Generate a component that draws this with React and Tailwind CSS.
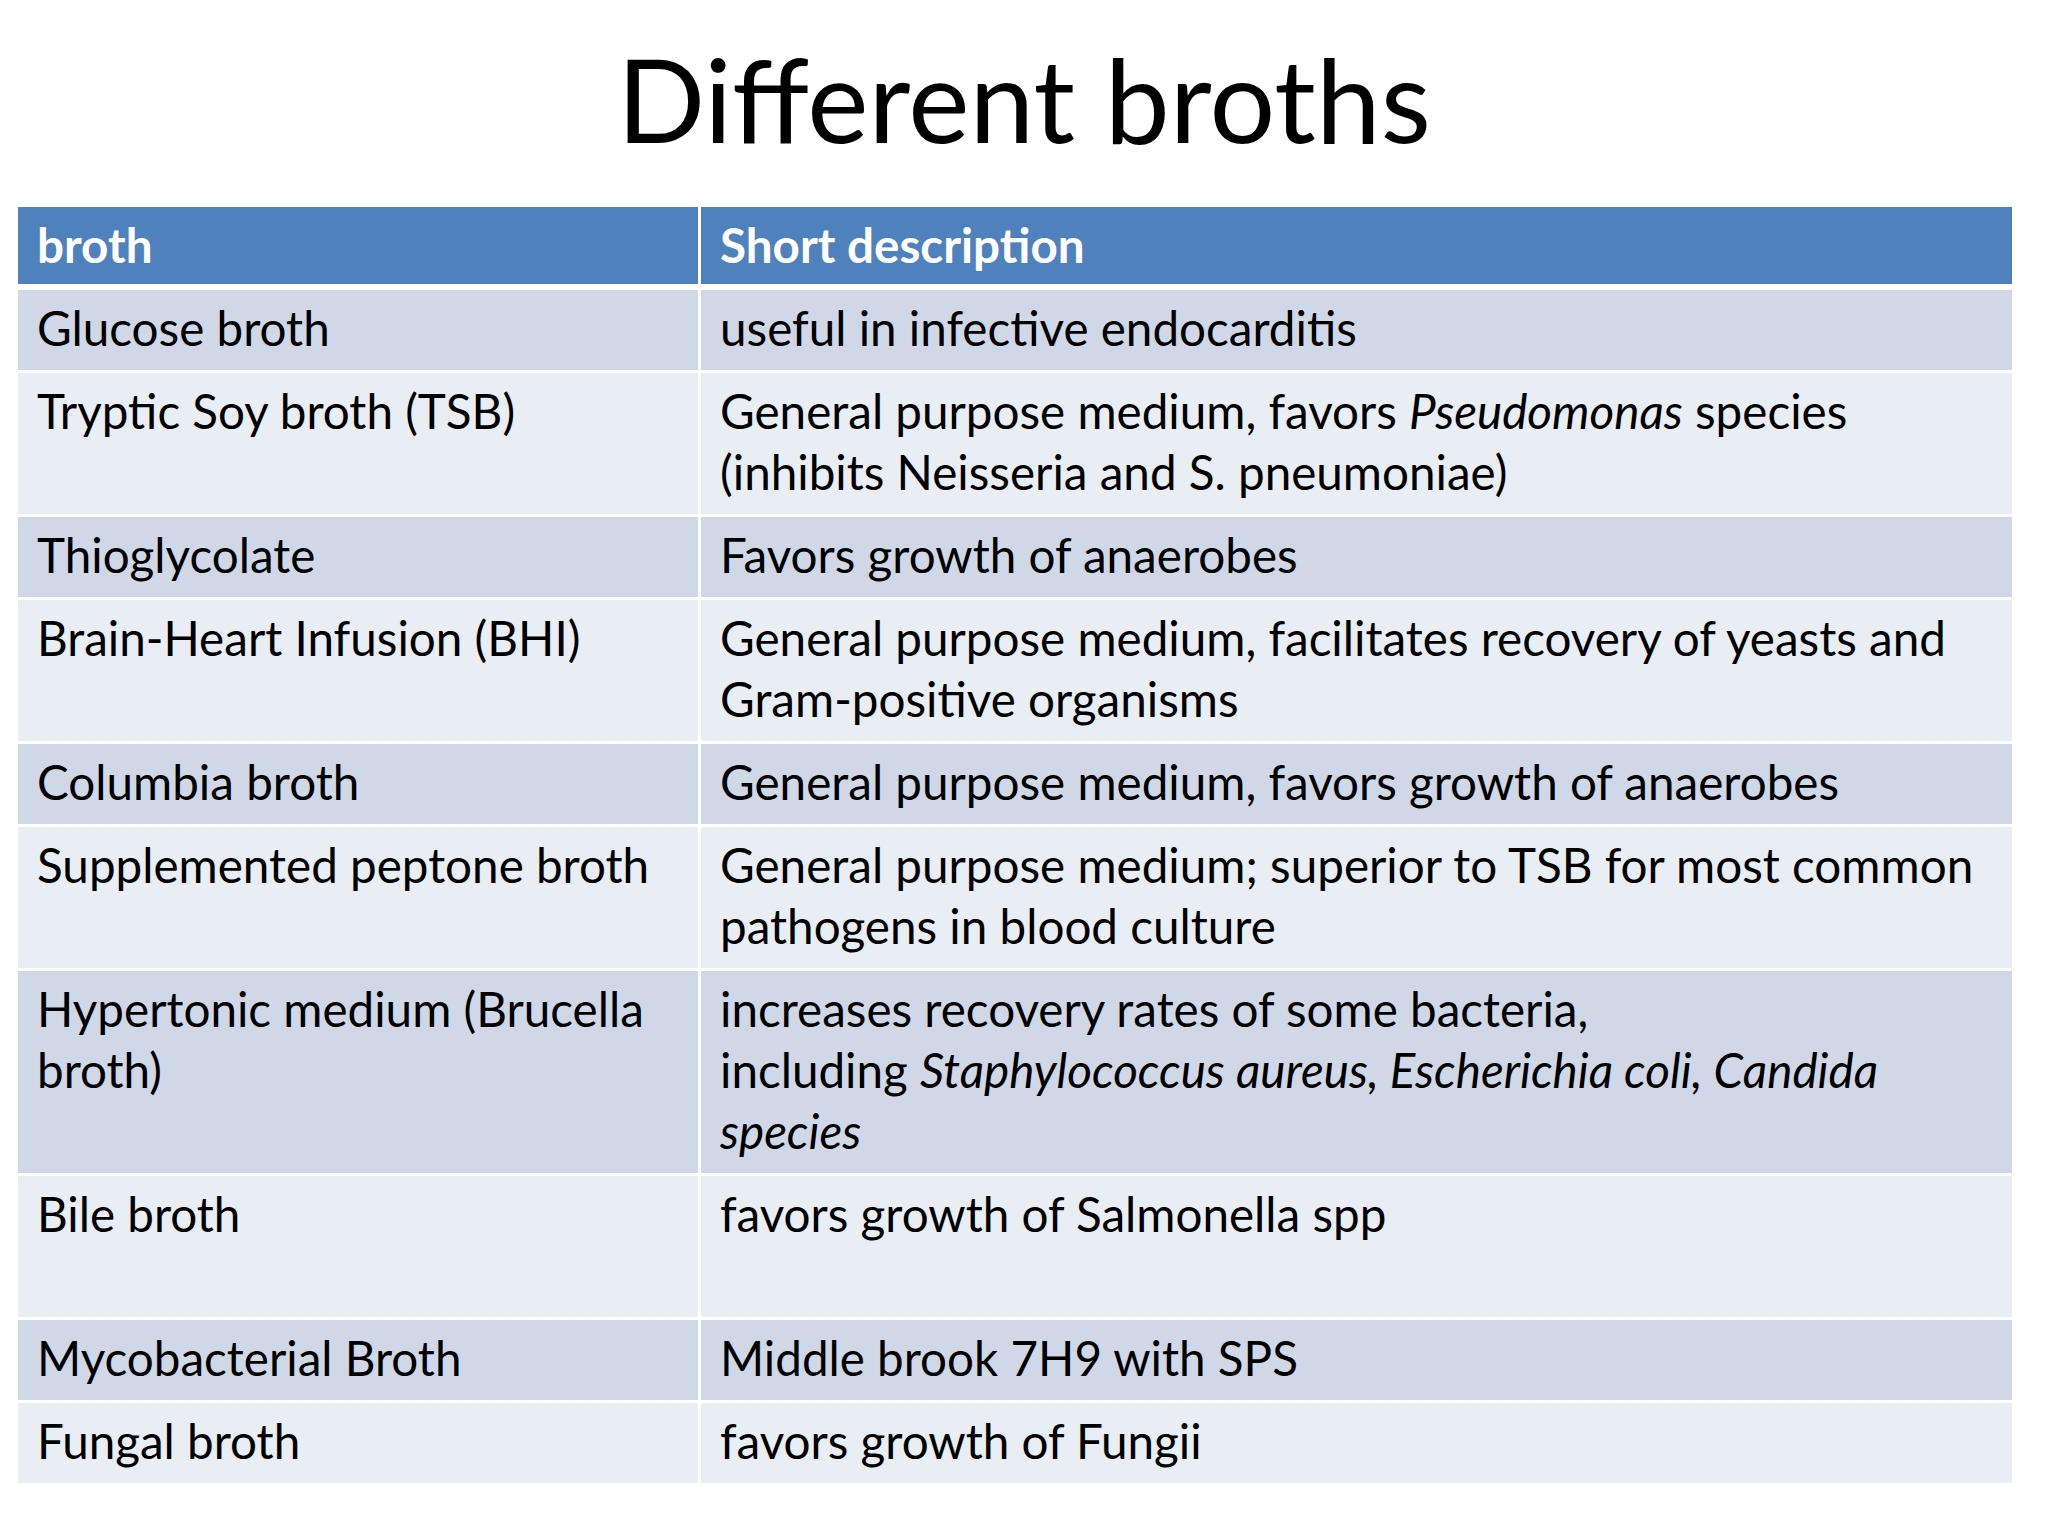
const rows = [
  { name: ['Glucose broth'], desc: [['useful in infective endocarditis']] },
  {
    name: ['Tryptic Soy broth (TSB)'],
    desc: [
      ['General purpose medium, favors ', <i key="p">Pseudomonas</i>, ' species'],
      ['(inhibits Neisseria and S. pneumoniae)'],
    ],
  },
  { name: ['Thioglycolate'], desc: [['Favors growth of anaerobes']] },
  {
    name: ['Brain-Heart Infusion (BHI)'],
    desc: [
      ['General purpose medium, facilitates recovery of yeasts and'],
      ['Gram-positive organisms'],
    ],
  },
  { name: ['Columbia broth'], desc: [['General purpose medium, favors growth of anaerobes']] },
  {
    name: ['Supplemented peptone broth'],
    desc: [
      ['General purpose medium; superior to TSB for most common'],
      ['pathogens in blood culture'],
    ],
  },
  {
    name: ['Hypertonic medium (Brucella', 'broth)'],
    desc: [
      ['increases recovery rates of some bacteria,'],
      ['including ', <i key="s">Staphylococcus aureus, Escherichia coli, Candida</i>],
      [<i key="sp">species</i>],
    ],
  },
  { name: ['Bile broth'], desc: [['favors growth of Salmonella spp']], lines: 2 },
  { name: ['Mycobacterial Broth'], desc: [['Middle brook 7H9 with SPS']] },
  { name: ['Fungal broth'], desc: [['favors growth of Fungii']] },
]

const cell = 'pl-[19px] pr-[12px] pt-[7px] pb-[12px] text-[47.6px] leading-[61px] text-black whitespace-nowrap'

export default function App() {
  return (
    <div className="w-[2048px] h-[1536px] bg-white font-['Lato',sans-serif] overflow-hidden">
      {/* Title */}
      <h1 className="pt-[41px] text-center text-[116px] leading-[116px] font-normal text-black">
        Different broths
      </h1>

      {/* Table */}
      <div className="mt-[50px] ml-[18px] grid grid-cols-[680px_1311px] gap-x-[3px] gap-y-[3px]">
        {['broth', 'Short description'].map(h => (
          <div
            key={h}
            className="bg-[#4f81bd] mb-[3px] pl-[19px] pt-[7px] pb-[9px] text-[47.6px] leading-[61px] font-bold text-white"
          >
            {h}
          </div>
        ))}

        {rows.map((r, i) => {
          const bg = i % 2 === 0 ? 'bg-[#d0d8e8]' : 'bg-[#e9edf4]'
          const minH = r.lines === 2 ? 'min-h-[141px]' : ''
          return [
            <div key={`n${i}`} className={`${cell} ${bg} ${minH}`}>
              {r.name.map((l, j) => <div key={j}>{l}</div>)}
            </div>,
            <div key={`d${i}`} className={`${cell} ${bg} ${minH}`}>
              {r.desc.map((l, j) => <div key={j}>{l}</div>)}
            </div>,
          ]
        })}
      </div>
    </div>
  )
}
